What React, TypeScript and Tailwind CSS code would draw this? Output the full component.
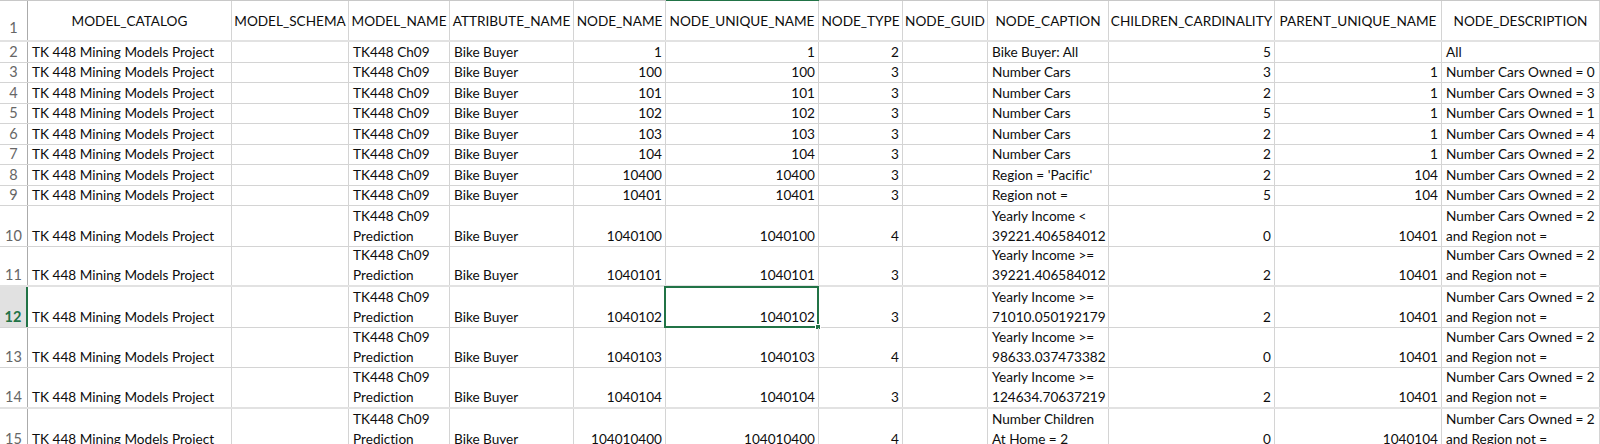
const font = { fontFamily: 'Lato, "Open Sans", sans-serif' }

type Col = { key: string; w: string; align: 'left' | 'right' }

const cols: Col[] = [
  { key: 'MODEL_CATALOG', w: 'w-[204px]', align: 'left' },
  { key: 'MODEL_SCHEMA', w: 'w-[117px]', align: 'left' },
  { key: 'MODEL_NAME', w: 'w-[101px]', align: 'left' },
  { key: 'ATTRIBUTE_NAME', w: 'w-[124px]', align: 'left' },
  { key: 'NODE_NAME', w: 'w-[92px]', align: 'right' },
  { key: 'NODE_UNIQUE_NAME', w: 'w-[153px]', align: 'right' },
  { key: 'NODE_TYPE', w: 'w-[84px]', align: 'right' },
  { key: 'NODE_GUID', w: 'w-[85px]', align: 'left' },
  { key: 'NODE_CAPTION', w: 'w-[121px]', align: 'left' },
  { key: 'CHILDREN_CARDINALITY', w: 'w-[166px]', align: 'right' },
  { key: 'PARENT_UNIQUE_NAME', w: 'w-[167px]', align: 'right' },
  { key: 'NODE_DESCRIPTION', w: 'flex-1', align: 'left' },
]

const P = 'TK 448 Mining Models Project'
const DESC2 = ['Number Cars Owned = 2', 'and Region not =']
const PRED = ['TK448 Ch09', 'Prediction']

type Row = { n: number; h: string; cells: (string | string[])[] }

const rows: Row[] = [
  { n: 2, h: 'h-[21px]', cells: [P, '', 'TK448 Ch09', 'Bike Buyer', '1', '1', '2', '', 'Bike Buyer: All', '5', '', 'All'] },
  { n: 3, h: 'h-[20px]', cells: [P, '', 'TK448 Ch09', 'Bike Buyer', '100', '100', '3', '', 'Number Cars', '3', '1', 'Number Cars Owned = 0'] },
  { n: 4, h: 'h-[21px]', cells: [P, '', 'TK448 Ch09', 'Bike Buyer', '101', '101', '3', '', 'Number Cars', '2', '1', 'Number Cars Owned = 3'] },
  { n: 5, h: 'h-[20px]', cells: [P, '', 'TK448 Ch09', 'Bike Buyer', '102', '102', '3', '', 'Number Cars', '5', '1', 'Number Cars Owned = 1'] },
  { n: 6, h: 'h-[21px]', cells: [P, '', 'TK448 Ch09', 'Bike Buyer', '103', '103', '3', '', 'Number Cars', '2', '1', 'Number Cars Owned = 4'] },
  { n: 7, h: 'h-[20px]', cells: [P, '', 'TK448 Ch09', 'Bike Buyer', '104', '104', '3', '', 'Number Cars', '2', '1', 'Number Cars Owned = 2'] },
  { n: 8, h: 'h-[21px]', cells: [P, '', 'TK448 Ch09', 'Bike Buyer', '10400', '10400', '3', '', "Region = 'Pacific'", '2', '104', 'Number Cars Owned = 2'] },
  { n: 9, h: 'h-[20px]', cells: [P, '', 'TK448 Ch09', 'Bike Buyer', '10401', '10401', '3', '', 'Region not =', '5', '104', 'Number Cars Owned = 2'] },
  { n: 10, h: 'h-[41px]', cells: [P, '', PRED, 'Bike Buyer', '1040100', '1040100', '4', '', ['Yearly Income <', '39221.406584012'], '0', '10401', DESC2] },
  { n: 11, h: 'h-[40px]', cells: [P, '', PRED, 'Bike Buyer', '1040101', '1040101', '3', '', ['Yearly Income >=', '39221.406584012'], '2', '10401', DESC2] },
  { n: 12, h: 'h-[41px]', cells: [P, '', PRED, 'Bike Buyer', '1040102', '1040102', '3', '', ['Yearly Income >=', '71010.050192179'], '2', '10401', DESC2] },
  { n: 13, h: 'h-[40px]', cells: [P, '', PRED, 'Bike Buyer', '1040103', '1040103', '4', '', ['Yearly Income >=', '98633.037473382'], '0', '10401', DESC2] },
  { n: 14, h: 'h-[41px]', cells: [P, '', PRED, 'Bike Buyer', '1040104', '1040104', '3', '', ['Yearly Income >=', '124634.70637219'], '2', '10401', DESC2] },
  { n: 15, h: 'h-[41px]', cells: [P, '', PRED, 'Bike Buyer', '104010400', '104010400', '4', '', ['Number Children', 'At Home = 2'], '0', '1040104', DESC2] },
]

const Cell = ({ col, value, selected }: { col: Col; value: string | string[]; selected?: boolean }) => (
  <div
    className={`relative flex shrink-0 flex-col justify-end border-r border-[#d4d4d4] px-[4px] pb-[0px] leading-[20px] ${col.w} ${
      col.align === 'right' ? 'items-end pr-[3px]' : 'items-start'
    }`}
  >
    {Array.isArray(value) ? value.map((line) => <span key={line} className="whitespace-nowrap">{line}</span>) : <span className="whitespace-nowrap">{value}</span>}
    {selected && (
      <div className="pointer-events-none absolute -top-[1px] -left-[2px] -right-[1px] -bottom-[1px] border-2 border-[#217346]">
        <div className="absolute -right-[4px] -bottom-[4px] h-[6px] w-[6px] border border-white bg-[#217346]" />
      </div>
    )}
  </div>
)

export default function App() {
  return (
    <div className="h-[444px] w-[1600px] overflow-hidden bg-white text-[13.6px] text-[#0d0d0d] [font-variant-ligatures:none]" style={font}>
      {/* column-letter strip bottom edge */}
      <div className="flex h-[1px]">
        <div className="w-[666px] bg-[#c8c8c8]" />
        <div className="w-[153px] bg-[#217346]" />
        <div className="flex-1 bg-[#c8c8c8]" />
      </div>

      {/* header row */}
      <div className="flex h-[41px] border-b-2 border-[#e2e2e2]">
        <div className="flex w-[28px] shrink-0 items-end justify-center border-r border-[#ababab] pb-[1px] text-[14.5px] text-[#666]">1</div>
        {cols.map((c) => (
          <div key={c.key} className={`flex shrink-0 items-center justify-center border-r border-[#d4d4d4] pt-[2px] whitespace-nowrap ${c.w}`}>
            {c.key}
          </div>
        ))}
      </div>

      {rows.map((r) => {
        const active = r.n === 12
        const thick = r.n === 11 || r.n === 14
        return (
          <div key={r.n} className={`flex ${r.h} ${thick ? 'border-b-2 border-[#e2e2e2]' : 'border-b border-[#d4d4d4]'}`}>
            <div
              className={`flex w-[28px] shrink-0 items-end justify-center text-[14.5px] leading-[20px] ${
                active ? 'border-r-2 border-[#217346] bg-[#e1e1e1] font-bold text-[#217346]' : 'border-r border-[#ababab] text-[#666]'
              }`}
            >
              {r.n}
            </div>
            {cols.map((c, i) => (
              <Cell key={c.key} col={c} value={r.cells[i]} selected={active && c.key === 'NODE_UNIQUE_NAME'} />
            ))}
          </div>
        )
      })}
    </div>
  )
}
